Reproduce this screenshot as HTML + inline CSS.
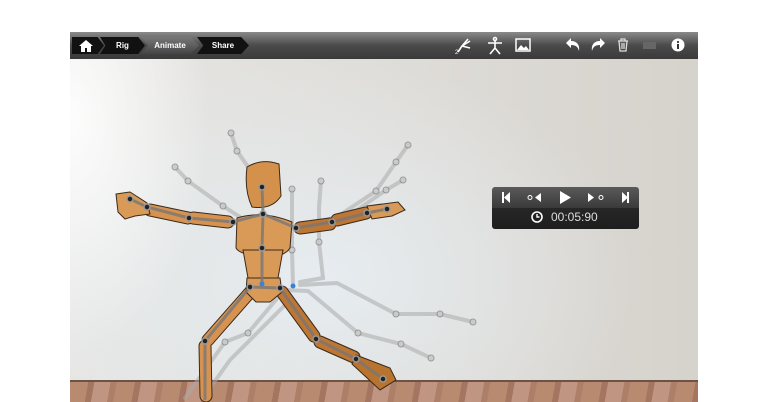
<!DOCTYPE html>
<html><head><meta charset="utf-8"><style>
body{margin:0;width:768px;height:402px;background:#fff;overflow:hidden;font-family:"Liberation Sans",sans-serif}
.frame{position:absolute;left:70px;top:32px;width:628px;height:370px;overflow:hidden}
.wall{position:absolute;left:0;top:27px;width:628px;height:321px;background:radial-gradient(ellipse 140px 240px at 0px 60px,#fdfdfd 0%,rgba(255,255,255,0) 100%),radial-gradient(ellipse 320px 220px at 250px 220px,#e6ecf0 0%,rgba(230,236,240,0) 100%),linear-gradient(90deg,#e6e6e4 0%,#dfddd9 50%,#d6d2cc 100%)}
.floor{position:absolute;left:0;top:348px;width:628px;height:22px;background:repeating-linear-gradient(100deg,#b88a70 0 18px,#a47560 18px 24px,#c09682 24px 40px,#ad7f68 40px 46px);border-top:2px solid #6d5246}
.bar{position:absolute;left:0;top:0;width:628px;height:27px;background:linear-gradient(#8a8a8a,#4a4a4a 50%,#3a3a3a)}
.crumb{position:absolute;top:5px;height:17px;color:#fff;font-size:8px;font-weight:bold;line-height:17px;text-align:center;background:#111;clip-path:polygon(0 0,85% 0,100% 50%,85% 100%,0 100%,12% 50%)}
.panel{position:absolute;left:422px;top:155px;width:147px;height:42px;border-radius:3px;background:linear-gradient(#5a5a5a,#3a3a3a 50%,#262626 50%,#1e1e1e);color:#fff}
</style></head><body>
<div class="frame">
<div class="wall"></div>
<div class="floor"></div>
<div class="bar">
 <div class="crumb" style="left:2px;width:32px;clip-path:polygon(0 0,80% 0,100% 50%,80% 100%,0 100%)"><svg width="14" height="12" viewBox="0 0 14 12" style="margin:3px 0 0 -4px"><path d="M7 0L0 6h2v6h4V8h2v4h4V6h2z" fill="#fff"/></svg></div>
 <div class="crumb" style="left:30px;width:45px">Rig</div>
 <div class="crumb" style="left:71px;width:58px;background:linear-gradient(#777,#444);">Animate</div>
 <div class="crumb" style="left:127px;width:52px">Share</div>
 <svg style="position:absolute;left:384px;top:5px" width="20" height="18" viewBox="0 0 20 18" stroke="#fff" stroke-width="1.6" fill="none"><path d="M14 2L8 9l8 2M8 9l-4 6M8 9l8-5"/><text x="1" y="17" font-size="6" fill="#fff" stroke="none">2</text></svg>
 <svg style="position:absolute;left:416px;top:4px" width="18" height="19" viewBox="0 0 18 19" stroke="#fff" stroke-width="1.6" fill="none"><circle cx="9" cy="3" r="1.5"/><path d="M2 7h14M9 5v7l-5 6M9 12l5 6"/></svg>
 <svg style="position:absolute;left:445px;top:6px" width="16" height="14" viewBox="0 0 16 14"><rect x="1" y="1" width="14" height="12" fill="none" stroke="#fff" stroke-width="1.5"/><path d="M2 12l4-5 3 3 2-2 3 4z" fill="#fff"/></svg>
 <svg style="position:absolute;left:495px;top:6px" width="16" height="14" viewBox="0 0 16 14"><path d="M1 5l5-5v3c6 0 9 4 8 10-1-4-3-6-8-6v3z" fill="#fff"/></svg>
 <svg style="position:absolute;left:520px;top:6px" width="16" height="14" viewBox="0 0 16 14"><path d="M15 5l-5-5v3C4 3 1 7 2 13c1-4 3-6 8-6v3z" fill="#fff"/></svg>
 <svg style="position:absolute;left:547px;top:6px" width="12" height="14" viewBox="0 0 12 14" fill="none" stroke="#ddd" stroke-width="1.3"><path d="M1 3h10M4 3V1h4v2M2 3l1 10h6l1-10M5 5v6M7 5v6"/></svg>
 <div style="position:absolute;left:573px;top:10px;width:13px;height:7px;background:#666"></div>
 <svg style="position:absolute;left:601px;top:6px" width="14" height="14" viewBox="0 0 14 14"><circle cx="7" cy="7" r="6.5" fill="#fff"/><rect x="6" y="6" width="2" height="5" fill="#333"/><circle cx="7" cy="4" r="1.1" fill="#333"/></svg>
</div>
<div class="panel">
 <svg style="position:absolute;left:0;top:0" width="147" height="21" viewBox="0 0 147 21" fill="#fff">
  <rect x="10" y="5" width="2" height="11"/><path d="M18 5v11l-6-5.5z"/>
  <circle cx="38" cy="10.5" r="2" fill="none" stroke="#fff"/><path d="M49 6v9l-6-4.5z"/>
  <path d="M68 4v13l11-6.5z"/>
  <path d="M96 6v9l6-4.5z"/><circle cx="109" cy="10.5" r="2" fill="none" stroke="#fff"/>
  <path d="M130 5v11l6-5.5z"/><rect x="135" y="5" width="2" height="11"/>
 </svg>
 <svg style="position:absolute;left:39px;top:24px" width="12" height="12" viewBox="0 0 12 12"><circle cx="6" cy="6" r="5" fill="none" stroke="#fff" stroke-width="1.6"/><path d="M6 3v3h2.5" stroke="#fff" stroke-width="1.4" fill="none"/></svg>
 <div style="position:absolute;left:59px;top:23px;font-size:12px;color:#ddd">00:05:90</div>
</div>
<svg style="position:absolute;left:0;top:0" width="628" height="370" viewBox="70 32 628 370">
 <g stroke="#aaa" stroke-width="4" stroke-linecap="round" fill="none" opacity="0.55">
  <path d="M231 133L237 151L262 187M175 167L188 181L223 206L240 217M408 145L396 162L376 191L340 215M403 180L386 190L357 210L320 222"/>
  <path d="M292 189L292 210L292 250L293 286M321 181L319 208L319 242L323 278L300 282"/>
  <path d="M285 290L308 291L358 333L401 344L431 358M300 285L337 283L396 314L440 314L473 322"/>
  <path d="M280 295L248 333L225 342L185 398M290 300L230 360L205 395"/>
 </g>
 <g fill="#ccc" stroke="#888" stroke-width="1" opacity="0.8">
  <circle cx="231" cy="133" r="3"/><circle cx="237" cy="151" r="3"/><circle cx="175" cy="167" r="3"/><circle cx="188" cy="181" r="3"/><circle cx="223" cy="206" r="3"/><circle cx="408" cy="145" r="3"/><circle cx="396" cy="162" r="3"/><circle cx="376" cy="191" r="3"/><circle cx="403" cy="180" r="3"/><circle cx="386" cy="190" r="3"/><circle cx="292" cy="189" r="3"/><circle cx="321" cy="181" r="3"/><circle cx="319" cy="242" r="3"/><circle cx="292" cy="250" r="3"/><circle cx="358" cy="333" r="3"/><circle cx="401" cy="344" r="3"/><circle cx="431" cy="358" r="3"/><circle cx="396" cy="314" r="3"/><circle cx="440" cy="314" r="3"/><circle cx="473" cy="322" r="3"/><circle cx="248" cy="333" r="3"/><circle cx="225" cy="342" r="3"/>
 </g>
 <g stroke-linecap="round" fill="none">
  <g stroke="#3a2a1a" stroke-width="13">
   <path d="M150 210L188 218M193 218L228 222M300 228L330 224M337 220L366 213M252 290L208 340M205 346L206 396M282 292L314 336M320 342L354 357"/>
  </g>
  <g stroke="#d6924e" stroke-width="11">
   <path d="M150 210L188 218M193 218L228 222M252 290L208 340M205 346L206 396"/>
  </g>
  <g stroke="#bd7634" stroke-width="11">
   <path d="M300 228L330 224M337 220L366 213M282 292L314 336M320 342L354 357"/>
  </g>
 </g>
 <g stroke="#3a2a1a" stroke-width="1" fill="#d99a58">
  <path d="M247 167Q262 158 279 164L281 196Q272 210 252 207Q244 190 247 167Z" fill="#d4914c"/>
  <path d="M237 218Q262 210 292 222L290 248Q284 258 262 256Q240 255 236 248Z"/>
  <path d="M243 250L283 250L278 278L248 278Z"/>
  <path d="M247 278L280 278L282 292L270 302L256 302L246 292Z"/>
  <path d="M116 194L130 192L147 203L150 214L135 216L125 219L118 212Z"/>
  <path d="M367 206L398 202L405 210L392 216L372 219Z"/>
  <path d="M356 355L390 368L396 380L380 390L352 364Z" fill="#b8732e"/>
 </g>
 <g stroke="#777" stroke-width="3" opacity="0.8" fill="none">
  <path d="M262 187L263 214L262 248L262 284M130 199L147 207L189 218L233 222L263 214L296 228L332 222L367 213L387 209M250 287L205 341L205 400M280 288L316 339L356 359L383 379M250 287L280 288"/>
 </g>
 <g fill="#222" stroke="#999" stroke-width="1.5">
  <circle cx="262" cy="187" r="3"/><circle cx="263" cy="214" r="3"/><circle cx="262" cy="248" r="3"/><circle cx="233" cy="222" r="3"/><circle cx="189" cy="218" r="3"/><circle cx="147" cy="207" r="3"/><circle cx="130" cy="199" r="3"/><circle cx="296" cy="228" r="3"/><circle cx="332" cy="222" r="3"/><circle cx="367" cy="213" r="3"/><circle cx="387" cy="209" r="3"/><circle cx="250" cy="287" r="3"/><circle cx="205" cy="341" r="3"/><circle cx="280" cy="288" r="3"/><circle cx="316" cy="339" r="3"/><circle cx="356" cy="359" r="3"/><circle cx="383" cy="379" r="3"/>
 </g>
 <circle cx="262" cy="284" r="2.5" fill="#3b82d6"/><circle cx="293" cy="286" r="2.5" fill="#3b82d6"/>
</svg>
</div>
</body></html>
